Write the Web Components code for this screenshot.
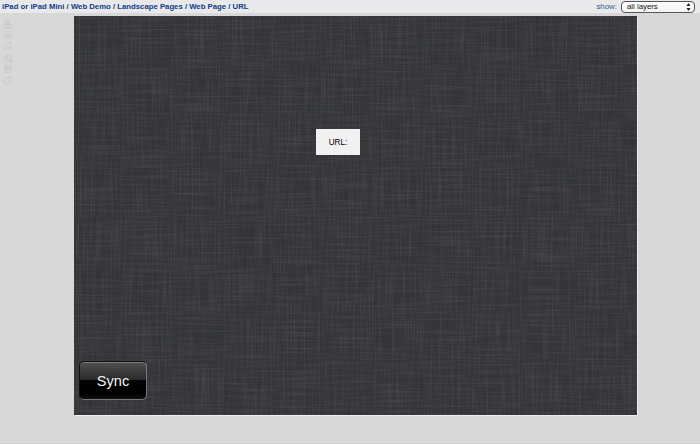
<!DOCTYPE html>
<html><head><meta charset="utf-8">
<style>
html,body{margin:0;height:444px;overflow:hidden;background:#d8d8d8;font-family:"Liberation Sans",Arial,sans-serif}
</style></head>
<body>
<proto-viewer>
  <proto-header slot="header">
    <span>iPad or iPad Mini / Web Demo / Landscape Pages / Web Page / URL</span>
  </proto-header>
  <proto-tools slot="tools"></proto-tools>
  <proto-canvas slot="canvas">
    <url-field>URL:</url-field>
    <sync-button>Sync</sync-button>
  </proto-canvas>
</proto-viewer>
<script>
function def(name, html){
  customElements.define(name, class extends HTMLElement{
    constructor(){super();this.attachShadow({mode:"open"}).innerHTML=html;}
  });
}
def("proto-viewer",`<style>
:host{display:grid;grid-template-columns:74px 563px 1fr;grid-template-rows:13px 3px 399px 1fr;height:444px;box-sizing:border-box;border-bottom:1px solid #cfcfcf;box-shadow:inset 0 -1px 0 #dedede}
.h{grid-column:1/-1;grid-row:1}
.t{grid-column:1;grid-row:3}
.c{grid-column:2;grid-row:3}
</style>
<div class="h"><slot name="header"></slot></div>
<div class="t"><slot name="tools"></slot></div>
<div class="c"><slot name="canvas"></slot></div>`);
def("proto-header",`<style>
:host{display:flex;align-items:center;justify-content:space-between;height:13px;background:#e9e9eb;padding:0 5px 0 2px;box-sizing:border-box;font:bold 7.75px/13px "Liberation Sans",Arial,sans-serif;color:#0f3d86}
.r{display:flex;align-items:center;gap:4px;font:normal 7.9px/13px "Liberation Sans",Arial,sans-serif;color:#2c5a9c}
.sel{display:flex;align-items:center;justify-content:space-between;width:74px;height:12px;margin-top:1px;box-sizing:border-box;border:1px solid #55565a;border-radius:4px;background:linear-gradient(#fff,#f2f2f2);padding:0 3px 0 5px;color:#111;font-size:7.8px;line-height:10px}
svg{display:block}
</style>
<slot></slot>
<div class="r"><span>show:</span><div class="sel"><span>all layers</span><svg width="5" height="8" viewBox="0 0 5 8"><path d="M2.5 0L4.500 3H.5zM2.5 8L.5 5h4z" fill="#222"/></svg></div></div>`);
const ic=(p)=>`<svg width="8" height="8" viewBox="0 0 8 8" fill="#d4d4d4" stroke="#cacaca" stroke-width="1">${p}</svg>`;
def("proto-tools",`<style>
:host{display:flex;flex-direction:column;gap:3.2px;padding:4px 0 0 4px}
svg{display:block}
</style>
${ic('<path d="M.5 .5h5v3h-5zM.5 4.500h7v3h-7z"/>')}
${ic('<path d="M2.500 .5h3v4h-3zM.5 5.500h7v2h-7z" fill="none"/>')}
${ic('<path d="M.5 4.500h5v3h-5zM7 .5v7M2 .5h5" fill="none"/>')}
${ic('<path d="M3 .5h4.500v7H3zM.5 2.500h2v3h-2z"/>')}
${ic('<path d="M.5 .5h3v3h-3zM5 .5h2.500v3H5zM1.500 4.500h5v3h-5z"/>')}
${ic('<path d="M.5 2.500h5v5h-5zM2.500 .5h5v5" fill="none"/>')}`);
def("proto-canvas",`<style>
:host{display:block;position:relative;width:563px;height:399px;background:#37383c;overflow:hidden;box-shadow:1px 1px 0 #efefef}
svg{position:absolute;inset:0;width:100%;height:100%}
</style>
<svg viewBox="0 0 563 399" preserveAspectRatio="none" aria-hidden="true">
<defs>
<filter id="v" x="0" y="0" width="100%" height="100%"><feTurbulence type="fractalNoise" baseFrequency="0.6 0.02" numOctaves="2" seed="4"/><feColorMatrix values="0 0 0 0 1  0 0 0 0 1  0 0 0 0 1  1.5 0 0 0 -0.62"/></filter>
<filter id="h" x="0" y="0" width="100%" height="100%"><feTurbulence type="fractalNoise" baseFrequency="0.02 0.6" numOctaves="2" seed="9"/><feColorMatrix values="0 0 0 0 1  0 0 0 0 1  0 0 0 0 1  1.5 0 0 0 -0.62"/></filter>
<pattern id="w" width="2" height="2" patternUnits="userSpaceOnUse"><rect width="1" height="1" fill="#000" fill-opacity=".14"/><rect x="1" y="1" width="1" height="1" fill="#000" fill-opacity=".14"/></pattern>
</defs>
<rect width="563" height="399" filter="url(#v)" opacity=".1"/>
<rect width="563" height="399" filter="url(#h)" opacity=".1"/>
<rect width="563" height="399" fill="url(#w)"/>
</svg><slot></slot>`);
def("url-field",`<style>
:host{position:absolute;left:242px;top:113px;width:44px;height:26px;display:flex;align-items:center;justify-content:center;background:#f1f1f1;box-sizing:border-box;color:#000;font:8.2px "Liberation Sans",Arial,sans-serif}
</style><slot></slot>`);
def("sync-button",`<style>
:host{position:absolute;left:5px;top:345px;width:68px;height:39px;display:flex;align-items:center;justify-content:center;box-sizing:border-box;border:1px solid #111;border-right-color:#77787a;border-bottom-color:#77787a;border-radius:5px;background:linear-gradient(#505052 0,#2a2a2b 48%,#030303 50%,#000 85%,#111 100%);box-shadow:inset 0 1px 0 #7a7a7c;color:#f4f4f4;font:14.6px "Liberation Sans",Arial,sans-serif}
</style><slot></slot>`);
</script>
</body></html>
